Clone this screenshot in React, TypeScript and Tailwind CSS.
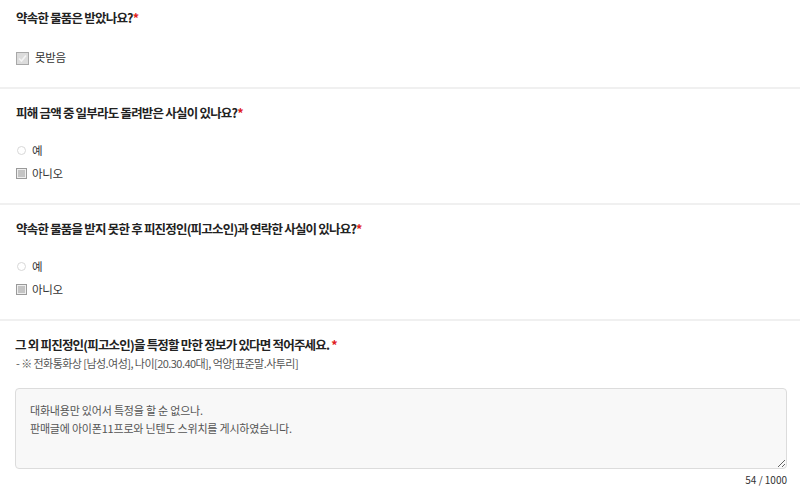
import React from "react";

const font = { fontFamily: '"Noto Sans CJK KR", "Noto Sans", sans-serif' };

function Title({ children, star = "*" }: { children: React.ReactNode; star?: string }) {
  return (
    <div className="text-[12.5px] leading-5 font-bold text-[#222] tracking-[-0.8px]">
      {children}
      <span className="text-[#e02020]">{star}</span>
    </div>
  );
}

function RadioOpt({ label }: { label: string }) {
  return (
    <div className="flex items-center h-[23px]">
      <span className="w-[11px] flex justify-center">
        <span className="w-[9px] h-[9px] rounded-full border border-[#d8d8d8] bg-white" />
      </span>
      <span className="ml-[5px] text-[11.5px] text-[#333]">{label}</span>
    </div>
  );
}

function SquareOpt({ label }: { label: string }) {
  return (
    <div className="flex items-center h-[23px]">
      <span className="w-[11px] flex justify-center">
        <span className="w-[11px] h-[11px] border border-[#9a9a9a] bg-[#eeeeee] flex items-center justify-center">
          <span className="w-[7px] h-[7px] bg-[#c4c4c4]" />
        </span>
      </span>
      <span className="ml-[5px] text-[11.5px] text-[#333] tracking-[-0.3px]">{label}</span>
    </div>
  );
}

function Divider() {
  return <div className="h-[2px] bg-[#f0f0f0]" />;
}

export default function App() {
  return (
    <div style={font} className="w-[800px] h-[500px] bg-white overflow-hidden">
      <section className="px-4 pt-[8px] h-[87px]">
        <Title>약속한 물품은 받았나요?</Title>
        <div className="flex items-center mt-[20px] h-[20px]">
          <span className="w-[13px] h-[13px] border border-[#a8a8a8] bg-[#dcdcdc] flex items-center justify-center">
            <svg width="11" height="11" viewBox="0 0 11 11">
              <path d="M2 5.5 L4.5 8 L9 2.5" fill="none" stroke="#f4f4f4" strokeWidth="1.6" />
            </svg>
          </span>
          <span className="ml-[6px] text-[11.5px] text-[#333] tracking-[-0.3px]">못받음</span>
        </div>
      </section>
      <Divider />
      <section className="px-4 pt-[14px] h-[114px]">
        <Title>피해 금액 중 일부라도 돌려받은 사실이 있나요?</Title>
        <div className="mt-[16px]">
          <RadioOpt label="예" />
          <SquareOpt label="아니오" />
        </div>
      </section>
      <Divider />
      <section className="px-4 pt-[14px] h-[114px]">
        <Title>약속한 물품을 받지 못한 후 피진정인(피고소인)과 연락한 사실이 있나요?</Title>
        <div className="mt-[16px]">
          <RadioOpt label="예" />
          <SquareOpt label="아니오" />
        </div>
      </section>
      <Divider />
      <section className="px-[15px] pt-[14px]">
        <Title star=" *">그 외 피진정인(피고소인)을 특정할 만한 정보가 있다면 적어주세요.</Title>
        <div className="text-[11px] leading-[16px] text-[#555] pl-[1px] tracking-[-0.55px]">
          - ※ 전화통화상 [남성.여성], 나이[20.30.40대], 억양[표준말.사투리]
        </div>
        <textarea
          readOnly
          defaultValue={"대화내용만 있어서 특정을 할 순 없으나.\n판매글에 아이폰11프로와 닌텐도 스위치를 게시하였습니다."}
          style={font}
          className="block mt-[17px] w-[772px] h-[81px] border border-[#dcdcdc] rounded-[4px] bg-[#f8f8f8] px-[14px] py-[12px] text-[11px] leading-[18px] text-[#555] tracking-[-0.2px] outline-none"
        />
        <div className="w-[772px] text-right text-[10px] text-[#333] mt-[3px]">54 / 1000</div>
      </section>
    </div>
  );
}
